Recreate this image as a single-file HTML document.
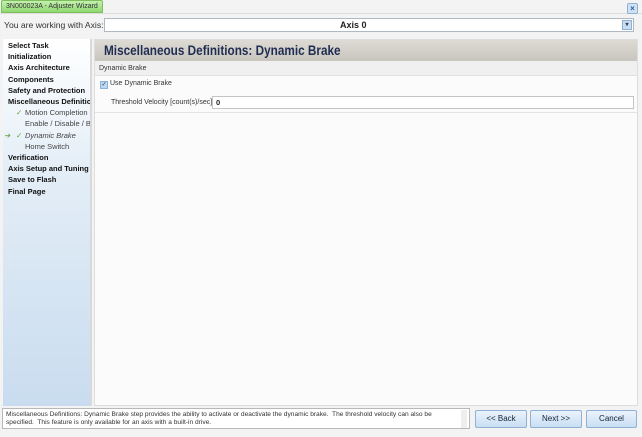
<!DOCTYPE html>
<html><head><meta charset="utf-8"><style>
*{margin:0;padding:0;box-sizing:border-box}
body{width:642px;height:437px;background:#f3f3f3;font-family:"Liberation Sans",sans-serif;position:relative;overflow:hidden;color:#222}
.abs{position:absolute}
.tab{left:1px;top:0;width:102px;height:13px;background:linear-gradient(#c6f0b0,#8fd870);border:1px solid #7cbf5c;border-radius:2px 2px 0 0;font-size:7px;line-height:11px;padding-left:4px;color:#333}
.close{left:627px;top:3px;width:11px;height:11px;background:#cfe3f5;border:1px solid #8fb1d6;border-radius:2px;font-size:8px;line-height:9px;text-align:center;color:#2a5a9a;font-weight:bold}
.axlbl{left:4px;top:20px;font-size:8.6px;color:#333;white-space:nowrap}
.combo{left:104px;top:18px;width:530px;height:14px;background:#fff;border:1px solid #aeb9c4;font-size:9px;font-weight:bold;line-height:12px;padding-left:235px}
.dd{right:1px;top:1px;width:10px;height:10px;background:#c8ddf2;border:1px solid #8fb1d6;font-size:6px;line-height:8px;text-align:center;color:#335}
.side{left:3px;top:39px;width:89px;height:367px;background:linear-gradient(#ffffff 0%,#e4eef7 35%,#c9dcef 100%);border-right:2px solid #d9d9d9}
.side div{font-size:7.5px;line-height:11.2px;white-space:nowrap;overflow:hidden;padding-left:5px;position:relative}
.b{font-weight:bold;color:#111}
.s{color:#444;padding-left:22px!important}
.main{left:94px;top:39px;width:544px;height:367px;background:#fbfbfb;border:1px solid #ddd}
.hdr{left:0;top:0;width:542px;height:21px;background:linear-gradient(#dedbd5,#c8c5be)}
.hdr span{position:absolute;left:9px;top:0;font-size:14px;font-weight:bold;color:#1f2d52;line-height:21px;transform:scaleX(0.84);transform-origin:left center;white-space:nowrap}
.sec{left:0;top:21px;width:542px;height:15px;background:#f0f0f0;border-bottom:1px solid #e2e2e2;font-size:7px;line-height:15px;padding-left:4px;color:#333}
.foot{left:2px;top:408px;width:468px;height:21px;background:#fff;border:1px solid #b8b8b8;font-size:6.6px;line-height:8px;padding:2px 18px 2px 3px;color:#333}
.btn{top:410px;height:18px;background:linear-gradient(#eaf3fc,#c9def3);border:1px solid #8fb1d6;border-radius:2px;font-size:8px;line-height:16px;text-align:center;color:#123}
</style></head><body>
<div class="abs tab">3N000023A - Adjuster Wizard</div>
<div class="abs" style="left:0;top:13px;width:642px;height:1px;background:#ddd"></div>
<div class="abs close">×</div>
<div class="abs axlbl">You are working with Axis:</div>
<div class="abs combo">Axis 0<div class="abs dd">▾</div></div>
<div class="abs side">
<div class="b" style="margin-top:1px">Select Task</div>
<div class="b">Initialization</div>
<div class="b">Axis Architecture</div>
<div class="b">Components</div>
<div class="b">Safety and Protection</div>
<div class="b">Miscellaneous Definitions</div>
<div class="s"><span style="position:absolute;left:13px;color:#5aa53a">✓</span>Motion Completion</div>
<div class="s">Enable / Disable / Brake</div>
<div class="s" style="font-style:italic"><span style="position:absolute;left:1px;color:#6aa84f">➔</span><span style="position:absolute;left:13px;color:#5aa53a;font-style:normal">✓</span>Dynamic Brake</div>
<div class="s">Home Switch</div>
<div class="b">Verification</div>
<div class="b">Axis Setup and Tuning</div>
<div class="b">Save to Flash</div>
<div class="b">Final Page</div>
</div>
<div class="abs main">
<div class="abs hdr"><span>Miscellaneous Definitions: Dynamic Brake</span></div>
<div class="abs sec">Dynamic Brake</div>
<div class="abs" style="left:5px;top:41px;width:8px;height:8px;background:#bcd7f0;border:1px solid #8fb1d6;font-size:6px;line-height:6px;text-align:center;color:#234">✓</div>
<div class="abs" style="left:15px;top:40px;font-size:7px;color:#333">Use Dynamic Brake</div>
<div class="abs" style="left:16px;top:59px;font-size:7px;color:#333;white-space:nowrap">Threshold Velocity [count(s)/sec]</div>
<div class="abs" style="left:117px;top:56px;width:422px;height:13px;background:#fff;border:1px solid #c4c4c4;font-size:7.5px;font-weight:bold;line-height:11px;padding-left:3px">0</div>
<div class="abs" style="left:0;top:72px;width:542px;height:1px;background:#e4e4e4"></div>
</div>
<div class="abs foot">Miscellaneous Definitions: Dynamic Brake step provides the ability to activate or deactivate the dynamic brake.&nbsp; The threshold velocity can also be specified.&nbsp; This feature is only available for an axis with a built-in drive.</div>
<div class="abs" style="left:461px;top:410px;width:6px;height:18px;background:#eee"></div>
<div class="abs btn" style="left:475px;width:52px">&lt;&lt; Back</div>
<div class="abs btn" style="left:530px;width:52px">Next &gt;&gt;</div>
<div class="abs btn" style="left:586px;width:51px">Cancel</div>
</body></html>
